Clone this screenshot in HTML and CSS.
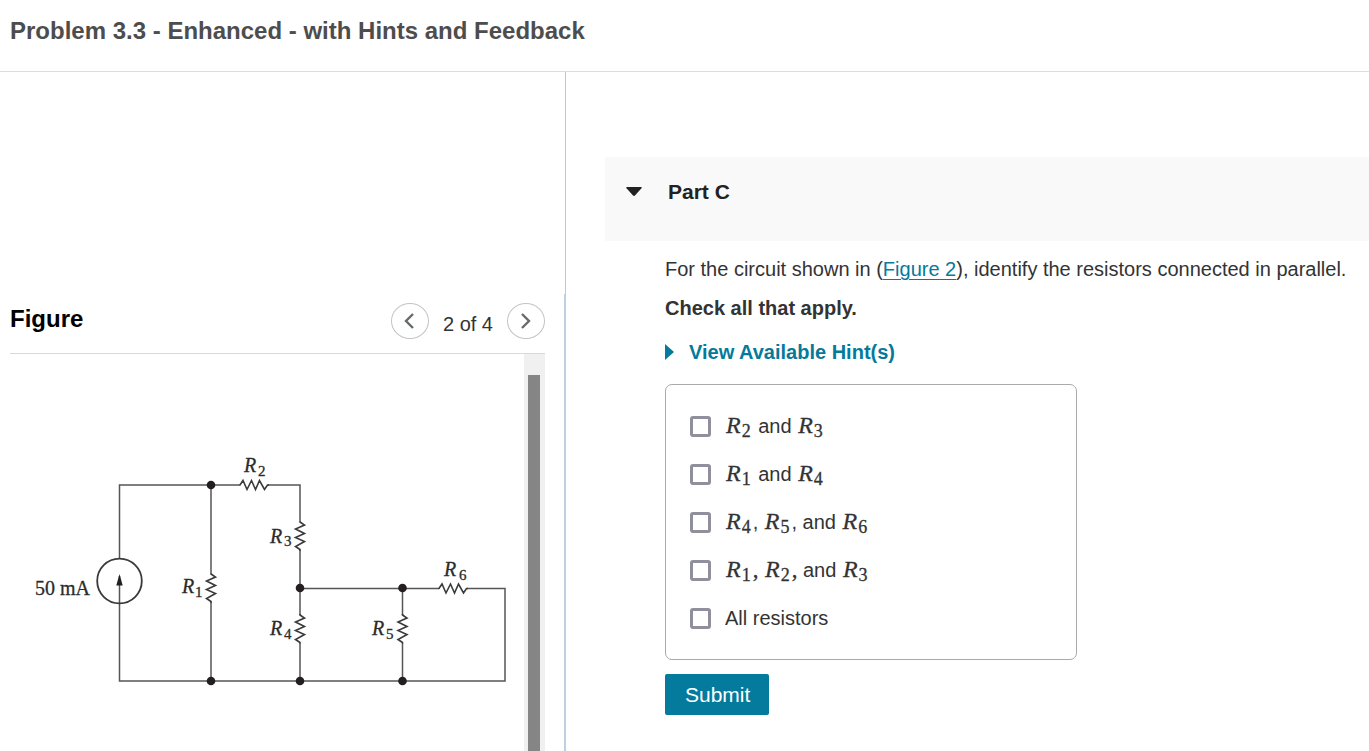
FILE: index.html
```html
<!DOCTYPE html>
<html lang="en">
<head>
<meta charset="utf-8">
<title>Problem 3.3 - Enhanced - with Hints and Feedback</title>
<link rel="stylesheet" href="styles.css">
</head>
<body>
<header class="page-header">
  <h1 class="page-title">Problem 3.3 - Enhanced - with Hints and Feedback</h1>
</header>
<main class="columns">
  <section class="side" aria-label="Figure panel">
    <div class="side-top"></div>
    <div class="figure-panel">
      <div class="figure-head">
        <h2 class="figure-title">Figure</h2>
        <nav class="pager" aria-label="Figures">
          <button class="pager-btn" type="button" aria-label="Previous figure">
            <svg width="18" height="18" viewBox="0 0 18 18"><path d="M12 2 L5 9 L12 16"/></svg>
          </button>
          <span class="pager-text">2 of 4</span>
          <button class="pager-btn" type="button" aria-label="Next figure">
            <svg width="18" height="18" viewBox="0 0 18 18"><path d="M5 2 L12 9 L5 16"/></svg>
          </button>
        </nav>
      </div>
      <div class="figure-body">
        <svg class="circuit" viewBox="10 354 514 397" role="img" aria-label="Circuit diagram">
          <defs>
            <path id="resistor" d="M0 0H1L4-4.500L8 4.500L12.500-4.500L16.500 4.500L20.500-4.500L25.500 4.500L28.500 0H30"/>
          </defs>
          <g class="wire">
            <path d="M119.500 559V485H239M268 485H300V521M300 550V615M300 644V681"/>
            <path d="M211 485V573M211 602V681"/>
            <path d="M300 588.500H438M467 588.500H505V681H119.500V576"/>
            <path d="M402.500 588V615M402.500 644V681"/>
          </g>
          <g class="zigzag">
            <use href="#resistor" transform="translate(239 485)"/>
            <use href="#resistor" transform="translate(438 588.500)"/>
            <use href="#resistor" transform="translate(211 573) rotate(90)"/>
            <use href="#resistor" transform="translate(300 521) rotate(90)"/>
            <use href="#resistor" transform="translate(300 614) rotate(90)"/>
            <use href="#resistor" transform="translate(402.500 614) rotate(90)"/>
          </g>
          <circle class="source" cx="119.500" cy="581" r="22.300"/>
          <g class="dot">
            <path d="M119.500 574L122.700 585.500H116.300Z"/>
            <circle cx="211" cy="485" r="4.300"/><circle cx="211" cy="681" r="4.300"/>
            <circle cx="300" cy="588" r="4.300"/><circle cx="300" cy="681" r="4.300"/>
            <circle cx="402.500" cy="588" r="4.300"/><circle cx="402.500" cy="681" r="4.300"/>
          </g>
          <g class="label">
            <text x="35" y="595">50 mA</text>
            <text x="244" y="472"><tspan class="var">R</tspan><tspan class="idx" x="258" y="476">2</tspan></text>
            <text x="270" y="543"><tspan class="var">R</tspan><tspan class="idx" x="284" y="546">3</tspan></text>
            <text x="182" y="593"><tspan class="var">R</tspan><tspan class="idx" x="195" y="597">1</tspan></text>
            <text x="270" y="635"><tspan class="var">R</tspan><tspan class="idx" x="284" y="639">4</tspan></text>
            <text x="372" y="635"><tspan class="var">R</tspan><tspan class="idx" x="386" y="639">5</tspan></text>
            <text x="444" y="576"><tspan class="var">R</tspan><tspan class="idx" x="459" y="580">6</tspan></text>
          </g>
        </svg>
        <div class="scroll-track"><div class="scroll-thumb"></div></div>
      </div>
    </div>
  </section>
  <section class="content">
    <button class="part-head" type="button" aria-expanded="true">
      <svg class="part-arrow" width="16" height="10" viewBox="0 0 16 10"><path d="M1 0H15Q16.500 0 15.500 1.300L9.200 8.300Q8 9.500 6.800 8.300L0.500 1.300Q-0.500 0 1 0Z"/></svg>
      <span>Part C</span>
    </button>
    <form class="part-body">
      <p class="question">For the circuit shown in (<a class="fig-link" href="#">Figure 2</a>), identify the resistors connected in parallel.</p>
      <p class="instruction">Check all that apply.</p>
      <button class="hints" type="button">
        <svg width="9" height="16" viewBox="0 0 9 16"><path d="M0 0L9 8L0 16Z"/></svg>
        <span>View Available Hint(s)</span>
      </button>
      <div class="choices">
        <label class="choice"><input class="tick" type="checkbox"><span><i class="sym">R</i><span class="sub">2</span> and <i class="sym">R</i><span class="sub">3</span></span></label>
        <label class="choice"><input class="tick" type="checkbox"><span><i class="sym">R</i><span class="sub">1</span> and <i class="sym">R</i><span class="sub">4</span></span></label>
        <label class="choice"><input class="tick" type="checkbox"><span><i class="sym">R</i><span class="sub">4</span>, <i class="sym">R</i><span class="sub">5</span>, and <i class="sym">R</i><span class="sub">6</span></span></label>
        <label class="choice"><input class="tick" type="checkbox"><span><i class="sym">R</i><span class="sub">1</span><span class="comma">,</span> <i class="sym">R</i><span class="sub">2</span><span class="comma">,</span> and <i class="sym">R</i><span class="sub">3</span></span></label>
        <label class="choice"><input class="tick" type="checkbox"><span>All resistors</span></label>
      </div>
      <button class="submit" type="button">Submit</button>
    </form>
  </section>
</main>
</body>
</html>
```

FILE: styles.css
```css
* { box-sizing: border-box; }
body {
  margin: 0;
  min-height: 100vh;
  display: flex;
  flex-direction: column;
  background: #fff;
  color: #333;
  font: 20px/24px "Liberation Sans", Arial, sans-serif;
}
h1, h2, p { margin: 0; }
button {
  font: inherit;
  margin: 0;
  padding: 0;
  border: 0;
  background: none;
  cursor: pointer;
}

.page-header {
  padding: 16px 10px 25px;
  border-bottom: 1px solid #ddd;
}
.page-title {
  color: #4d4d4d;
  font-size: 24px;
  line-height: 30px;
}
.columns {
  flex: 1;
  display: grid;
  grid-template-columns: 566fr 803fr;
}

.side {
  display: flex;
  flex-direction: column;
}
.side-top {
  height: 222px;
  border-right: 1px solid #bfc9d6;
}
.figure-panel {
  flex: 1;
  display: flex;
  flex-direction: column;
  padding: 0 19px 0 10px;
  border-right: 2px solid #bdcfe0;
}
.figure-head {
  height: 60px;
  display: flex;
  align-items: center;
  justify-content: space-between;
  padding-bottom: 6px;
  border-bottom: 1px solid #d9d9d9;
}
.figure-title {
  color: #000;
  font-size: 24px;
  line-height: 24px;
  padding-bottom: 4px;
}
.pager {
  display: flex;
  align-items: center;
  gap: 14px;
}
.pager-btn {
  width: 38px;
  height: 36px;
  border: 1px solid #c4c4c4;
  border-radius: 50%;
  display: flex;
  align-items: center;
  justify-content: center;
}
.pager-btn path {
  fill: none;
  stroke: #656a6a;
  stroke-width: 2.4;
}
.pager-text { padding-top: 6px; }
.figure-body {
  flex: 1;
  display: flex;
}
.circuit {
  flex: 1;
  min-width: 0;
  align-self: flex-start;
}
.wire, .zigzag {
  fill: none;
  stroke: #555;
  stroke-width: 1.5;
}
.zigzag {
  stroke: #3a3a3a;
  stroke-width: 1.6;
}
.source {
  fill: none;
  stroke: #3a3a3a;
  stroke-width: 1.8;
}
.dot { fill: #231f20; }
.label {
  fill: #2b2b2b;
  stroke: #2b2b2b;
  stroke-width: 0.3;
  font: 20px "Liberation Serif", "Times New Roman", serif;
}
.var { font-style: italic; }
.idx { font-size: 15px; }
.scroll-track {
  width: 21px;
  padding: 21px 5px 0 4px;
  background: #f0f0f0;
  display: flex;
}
.scroll-thumb {
  flex: 1;
  background: #858585;
}

.content { padding: 85px 0 0 39px; }
.part-head {
  width: 100%;
  height: 84px;
  padding: 0 21px 14px;
  display: flex;
  align-items: center;
  gap: 26px;
  background: #f9f9f9;
  color: #222;
  font-size: 21px;
  font-weight: bold;
}
.part-arrow { fill: #222; }
.part-body {
  padding: 16px 20px 20px 60px;
  display: flex;
  flex-direction: column;
  align-items: flex-start;
}
.instruction {
  margin-top: 15px;
  font-weight: bold;
}
.fig-link {
  color: #047a9c;
  text-decoration-thickness: 1px;
  text-underline-offset: 3px;
}
.hints {
  margin-top: 20px;
  display: flex;
  align-items: center;
  gap: 15px;
  color: #047a9c;
  font-weight: bold;
}
.hints path { fill: #047a9c; }
.choices {
  width: 412px;
  max-width: 100%;
  margin-top: 20px;
  padding: 17px 24px;
  border: 1px solid #aaa;
  border-radius: 7px;
}
.choice {
  height: 48px;
  display: flex;
  align-items: center;
  gap: 14px;
}
.tick {
  appearance: none;
  width: 21px;
  height: 21px;
  margin: 0;
  border: 3px solid #8f8f9d;
  border-radius: 3px;
  background: #fff;
}
.sym, .sub, .comma {
  font-family: "Liberation Serif", "Times New Roman", serif;
  line-height: 20px;
  -webkit-text-stroke: 0.3px #333;
}
.sym {
  margin: 0 1px;
  font-size: 24px;
}
.sub {
  position: relative;
  top: 4px;
  margin-right: 2px;
  font-size: 18px;
}
.comma { font-size: 23px; }
.submit {
  margin-top: 14px;
  padding: 9px 19px 8px 20px;
  border-radius: 2px;
  background: #047a9c;
  color: #fff;
  font-size: 21px;
}
```
